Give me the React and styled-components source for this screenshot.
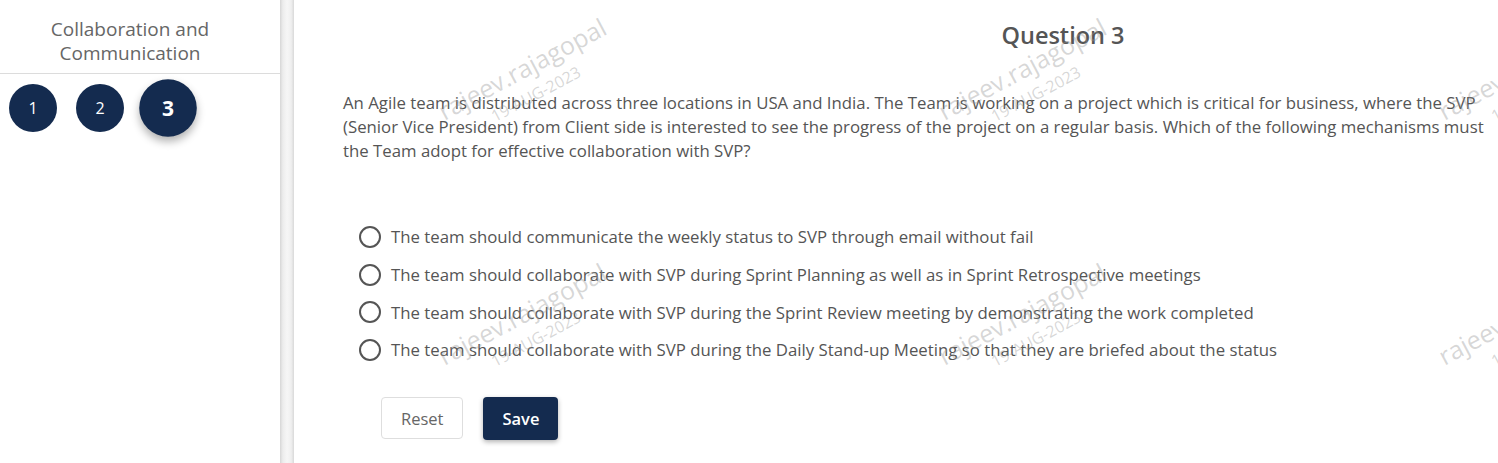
import React from "react";
import styled, { createGlobalStyle } from "styled-components";

const navy = "#142b4f";

const GlobalStyle = createGlobalStyle`
    html, body {
        margin: 0;
        padding: 0;
        background: #fff;
        overflow: hidden;
    }
    body {
        font-family: "Open Sans", "Liberation Sans", sans-serif;
        color: #555;
    }
`

const options = [
    "The team should communicate the weekly status to SVP through email without fail",
    "The team should collaborate with SVP during Sprint Planning as well as in Sprint Retrospective meetings",
    "The team should collaborate with SVP during the Sprint Review meeting by demonstrating the work completed",
    "The team should collaborate with SVP during the Daily Stand-up Meeting so that they are briefed about the status",
];

const App = () => {
    return (
        <>
            <GlobalStyle />
            <Page>
                <Sidebar>
                    <SectionTitle>Collaboration and<br />Communication</SectionTitle>
                    <Steps>
                        <Step>1</Step>
                        <Step>2</Step>
                        <Step active>3</Step>
                    </Steps>
                </Sidebar>
                <Splitter />
                <Main>
                    <Content>
                        <Title>Question 3</Title>
                        <QuestionText>
                            An Agile team is distributed across three locations in USA and India. The Team is working on a project which is critical for business, where the SVP (Senior Vice President) from Client side is interested to see the progress of the project on a regular basis. Which of the following mechanisms must the Team adopt for effective collaboration with SVP?
                        </QuestionText>
                        <Options>
                            {options.map((o) => (
                                <Option key={o}>
                                    <Radio />
                                    <span>{o}</span>
                                </Option>
                            ))}
                        </Options>
                        <Actions>
                            <ResetButton>Reset</ResetButton>
                            <SaveButton>Save</SaveButton>
                        </Actions>
                    </Content>
                    <WatermarkLayer>
                        {Array.from({ length: 9 }).map((_, i) => (
                            <Tile key={i}>
                                <Mark>
                                    <MarkName>rajeev.rajagopal</MarkName>
                                    <MarkDate>19-AUG-2023</MarkDate>
                                </Mark>
                            </Tile>
                        ))}
                    </WatermarkLayer>
                </Main>
            </Page>
        </>
    );
}

const Page = styled.div`
    display: flex;
    width: 1498px;
    height: 463px;
`

const Sidebar = styled.aside`
    width: 280px;
    flex-shrink: 0;
    display: flex;
    flex-direction: column;
`

const SectionTitle = styled.div`
    height: 74px;
    box-sizing: border-box;
    padding: 17px 20px 0 0;
    border-bottom: 1px solid #dcdcdc;
    text-align: center;
    font-size: 19px;
    line-height: 24px;
    color: #666;
`

const Steps = styled.div`
    display: flex;
    align-items: center;
    gap: 19px;
    padding: 10px 0 0 9px;
`

const Step = styled.div`
    width: 48px;
    height: 48px;
    border-radius: 50%;
    background: ${navy};
    color: #fff;
    display: flex;
    align-items: center;
    justify-content: center;
    font-size: ${props => props.active ? "17.5px" : "16px"};
    font-weight: ${props => props.active ? 700 : 400};
    transform: ${props => props.active ? "scale(1.2)" : "none"};
    margin-left: ${props => props.active ? "1px" : "0"};
    box-shadow: ${props => props.active ? "0 4px 7px rgba(0,0,0,0.3)" : "none"};
`

const Splitter = styled.div`
    width: 14px;
    flex-shrink: 0;
    background: linear-gradient(to right, #d6d6d6 0%, #ececec 20%, #f6f6f6 50%, #efefef 80%, #d9d9d9 100%);
`

const Main = styled.main`
    flex: 1;
    position: relative;
    overflow: hidden;
`

const Content = styled.div`
    padding: 19px 0 0 49px;
    width: 1440px;
`

const Title = styled.h2`
    margin: 0;
    text-align: center;
    font-size: 23.5px;
    line-height: 32px;
    font-weight: 600;
    color: #555;
`

const QuestionText = styled.p`
    margin: 40px 0 0;
    width: 1160px;
    font-size: 16.8px;
    line-height: 24px;
    color: #555;
`

const Options = styled.div`
    margin-top: 55px;
    padding-left: 16px;
    display: flex;
    flex-direction: column;
`

const Option = styled.label`
    display: flex;
    align-items: center;
    gap: 10px;
    height: 37.7px;
    font-size: 16.8px;
    color: #555;
`

const Radio = styled.span`
    width: 22px;
    height: 22px;
    box-sizing: border-box;
    border: 2px solid #555;
    border-radius: 50%;
    flex-shrink: 0;
`

const Actions = styled.div`
    display: flex;
    align-items: center;
    gap: 20px;
    margin-top: 28px;
    padding-left: 38px;
`

const ResetButton = styled.button`
    height: 42px;
    padding: 0 19px;
    background: #fff;
    border: 1px solid #dedede;
    border-radius: 4px;
    font-family: inherit;
    font-size: 16.5px;
    color: #666;
`

const SaveButton = styled.button`
    height: 43px;
    padding: 0 19px;
    background: ${navy};
    border: none;
    border-radius: 4px;
    font-family: inherit;
    font-size: 16.5px;
    font-weight: 600;
    color: #fff;
    box-shadow: 0 2px 5px rgba(0,0,0,0.3);
`

const WatermarkLayer = styled.div`
    position: absolute;
    inset: 0;
    pointer-events: none;
    display: grid;
    grid-template-columns: repeat(3, 500px);
    grid-auto-rows: 245px;
    margin: -95px 0 0 150px;
`

const Tile = styled.div`
    display: flex;
    align-items: flex-end;
`

const Mark = styled.div`
    transform: rotate(-28deg);
    transform-origin: 0 22px;
    color: rgba(150,150,150,0.38);
    white-space: nowrap;
    height: 52px;
`

const MarkName = styled.div`
    font-size: 25px;
    line-height: 26px;
`

const MarkDate = styled.div`
    font-size: 16px;
    line-height: 20px;
    margin-top: 6px;
    padding-left: 44px;
`

export default App;
